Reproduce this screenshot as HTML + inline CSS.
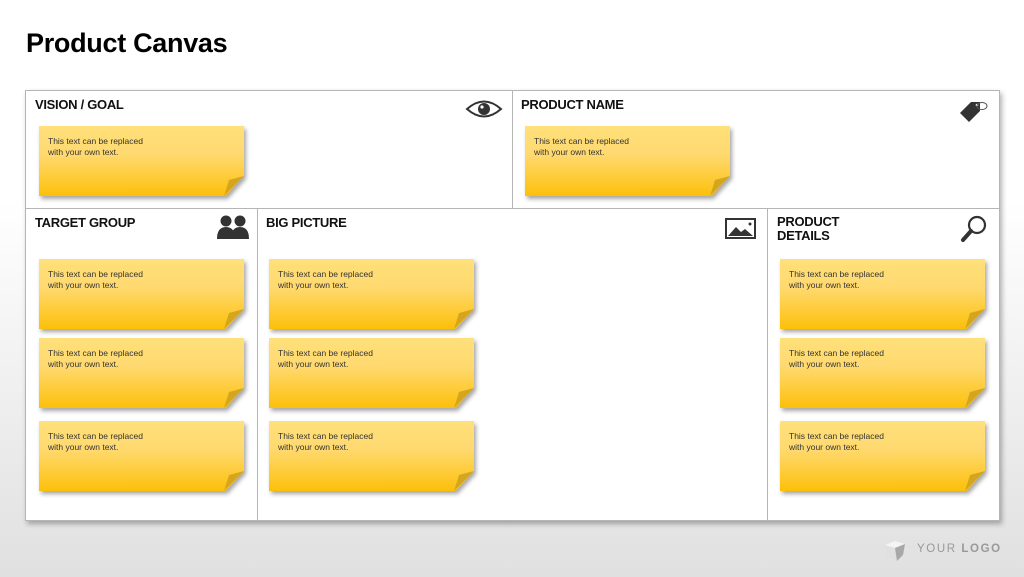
<!DOCTYPE html>
<html><head><meta charset="utf-8"><style>
*{margin:0;padding:0;box-sizing:border-box}
body{width:1024px;height:577px;overflow:hidden;position:relative;font-family:"Liberation Sans",sans-serif;background:linear-gradient(#ffffff 0%,#ffffff 35%,#e0e0e0 100%)}
h1{position:absolute;left:26px;top:28px;font-size:27px;font-weight:bold;color:#000;letter-spacing:-0.3px}
.canvas{position:absolute;left:25px;top:90px;width:975px;height:431px;background:#fff;border:1px solid #b5b5b5;box-shadow:2px 3px 5px rgba(0,0,0,.3)}
.l{position:absolute;background:#b5b5b5}
.t{position:absolute;font-size:13px;font-weight:bold;color:#111;line-height:14px;letter-spacing:-0.3px}
.w{position:absolute;width:205px;height:70px;filter:drop-shadow(2px 3px 2px rgba(0,0,0,.35))}
.n{position:absolute;left:0;top:0;width:205px;height:70px;background:linear-gradient(#ffe07a 0%,#ffd970 40%,#fcc00a 100%);clip-path:polygon(0 0,100% 0,100% 71%,91% 100%,0 100%);font-size:8.5px;color:#333;padding:10px 0 0 9px;line-height:11px}
.w svg{position:absolute;left:185px;top:49px}
svg{position:absolute}
.logo{position:absolute;left:917px;top:543px;font-size:11.5px;color:#999;letter-spacing:1.6px}
</style></head><body>
<h1>Product Canvas</h1>
<div class="canvas"></div>
<div class="l" style="left:26px;top:208px;width:973px;height:1px"></div>
<div class="l" style="left:512px;top:91px;width:1px;height:117px"></div>
<div class="l" style="left:257px;top:208px;width:1px;height:312px"></div>
<div class="l" style="left:767px;top:208px;width:1px;height:312px"></div>

<div class="t" style="left:35px;top:98px">VISION / GOAL</div>
<div class="t" style="left:521px;top:98px">PRODUCT NAME</div>
<div class="t" style="left:35px;top:216px">TARGET GROUP</div>
<div class="t" style="left:266px;top:216px">BIG PICTURE</div>
<div class="t" style="left:777px;top:215px">PRODUCT<br>DETAILS</div>

<svg style="left:465px;top:98px" width="38" height="22" viewBox="0 0 38 22"><path d="M2 11 Q19 -4 36 11 Q19 26 2 11Z" fill="none" stroke="#333" stroke-width="2"/><circle cx="19" cy="11" r="6" fill="#333"/><circle cx="17" cy="9" r="1.6" fill="#fff"/></svg>
<svg style="left:958px;top:99px" width="32" height="26" viewBox="0 0 32 26"><path d="M2 14 L13 3 L22 3 L22 12 L11 23 Z" fill="#333"/><circle cx="19" cy="6" r="1.3" fill="#fff"/><ellipse cx="24" cy="7" rx="5" ry="3.5" fill="none" stroke="#555" stroke-width="1"/></svg>
<svg style="left:216px;top:214px" width="34" height="26" viewBox="0 0 34 26"><circle cx="10" cy="7" r="5.5" fill="#333"/><path d="M1 25 Q1 13 10 13 Q19 13 19 25Z" fill="#333"/><circle cx="24" cy="7" r="5.5" fill="#333"/><path d="M15 25 Q15 13 24 13 Q33 13 33 25Z" fill="#333"/></svg>
<svg style="left:725px;top:218px" width="31" height="21" viewBox="0 0 31 21"><rect x="1" y="1" width="29" height="19" fill="none" stroke="#333" stroke-width="2"/><path d="M3 18 L11 9 L16 14 L20 11 L28 18Z" fill="#333"/><circle cx="25" cy="6" r="1.5" fill="#333"/></svg>
<svg style="left:960px;top:215px" width="28" height="28" viewBox="0 0 28 28"><circle cx="17" cy="10" r="8" fill="none" stroke="#333" stroke-width="2.2"/><path d="M11 16 L3 25" stroke="#333" stroke-width="4" stroke-linecap="round"/></svg>

<div class="w" style="left:39px;top:126px"><div class="n">This text can be replaced<br>with your own text.</div><svg width="20" height="21"><path d="M20 1 L0 21 L5 5Z" fill="#d6a520"/></svg></div>
<div class="w" style="left:525px;top:126px"><div class="n">This text can be replaced<br>with your own text.</div><svg width="20" height="21"><path d="M20 1 L0 21 L5 5Z" fill="#d6a520"/></svg></div>
<div class="w" style="left:39px;top:259px"><div class="n">This text can be replaced<br>with your own text.</div><svg width="20" height="21"><path d="M20 1 L0 21 L5 5Z" fill="#d6a520"/></svg></div>
<div class="w" style="left:39px;top:338px"><div class="n">This text can be replaced<br>with your own text.</div><svg width="20" height="21"><path d="M20 1 L0 21 L5 5Z" fill="#d6a520"/></svg></div>
<div class="w" style="left:39px;top:421px"><div class="n">This text can be replaced<br>with your own text.</div><svg width="20" height="21"><path d="M20 1 L0 21 L5 5Z" fill="#d6a520"/></svg></div>
<div class="w" style="left:269px;top:259px"><div class="n">This text can be replaced<br>with your own text.</div><svg width="20" height="21"><path d="M20 1 L0 21 L5 5Z" fill="#d6a520"/></svg></div>
<div class="w" style="left:269px;top:338px"><div class="n">This text can be replaced<br>with your own text.</div><svg width="20" height="21"><path d="M20 1 L0 21 L5 5Z" fill="#d6a520"/></svg></div>
<div class="w" style="left:269px;top:421px"><div class="n">This text can be replaced<br>with your own text.</div><svg width="20" height="21"><path d="M20 1 L0 21 L5 5Z" fill="#d6a520"/></svg></div>
<div class="w" style="left:780px;top:259px"><div class="n">This text can be replaced<br>with your own text.</div><svg width="20" height="21"><path d="M20 1 L0 21 L5 5Z" fill="#d6a520"/></svg></div>
<div class="w" style="left:780px;top:338px"><div class="n">This text can be replaced<br>with your own text.</div><svg width="20" height="21"><path d="M20 1 L0 21 L5 5Z" fill="#d6a520"/></svg></div>
<div class="w" style="left:780px;top:421px"><div class="n">This text can be replaced<br>with your own text.</div><svg width="20" height="21"><path d="M20 1 L0 21 L5 5Z" fill="#d6a520"/></svg></div>

<svg style="left:883px;top:539px" width="24" height="24" viewBox="0 0 24 24"><path d="M2 6 L12 2 L22 5 L12 9Z" fill="#f4f4f4"/><path d="M2 6 L12 9 L14 22 L4 18Z" fill="#e0e0e0"/><path d="M12 9 L22 5 L20 16 L14 22Z" fill="#a8a8a8"/></svg>
<div class="logo">YOUR <b>LOGO</b></div>
</body></html>
